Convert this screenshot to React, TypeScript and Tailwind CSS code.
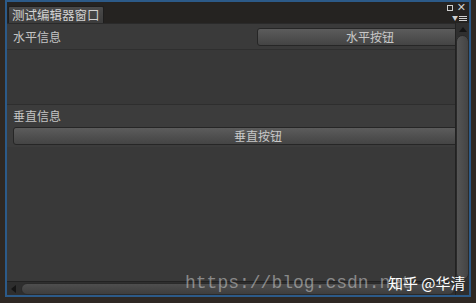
import React from "react";

const cjk = { fontFamily: '"Noto Sans CJK SC", "Liberation Sans", sans-serif' };

export default function App() {
  return (
    <div className="w-[476px] h-[303px] bg-[#2e2823] flex flex-col px-[5px] pb-[6px] relative overflow-hidden" style={cjk}>
      <div className="flex-1 flex flex-col border-2 border-[#2c5a88] bg-[#262626] min-h-0">
        {/* tab bar */}
        <div className="h-[21px] flex items-end pl-[1px] relative shrink-0 bg-[#252321]">
          <div className="h-[17px] w-[96px] bg-gradient-to-b from-[#4a4a4a] to-[#3c3c3c] border border-b-0 border-[#1e1e1e] rounded-t-[2px] flex items-center pl-[3px]">
            <span className="text-[12.5px] leading-none text-[#d2d2d2] whitespace-nowrap">测试编辑器窗口</span>
          </div>
          <div className="absolute right-[16px] top-[3px] w-[6px] h-[6px] border border-[#cfcfcf] bg-[#252321]" />
          <div className="absolute right-[3px] top-[0px] text-[11px] leading-none text-[#cfcfcf]" style={{ fontFamily: '"DejaVu Sans", sans-serif' }}>✕</div>
          <div className="absolute right-[2px] top-[13px] flex items-center gap-[1px]">
            <span className="text-[6px] leading-none text-[#d0d0d0]">▼</span>
            <div className="flex flex-col gap-[1px]">
              <div className="w-[8px] h-[1px] bg-[#d0d0d0]" />
              <div className="w-[8px] h-[1px] bg-[#d0d0d0]" />
              <div className="w-[8px] h-[1px] bg-[#d0d0d0]" />
            </div>
          </div>
        </div>
        {/* body */}
        <div className="flex-1 flex min-h-0">
          <div className="flex-1 flex flex-col bg-[#383838] border-t border-[#2a2a2a] min-w-0">
            <div className="flex-1 flex flex-col overflow-hidden">
              {/* horizontal row */}
              <div className="h-[26px] shrink-0 flex items-center pl-[6px] border-b border-[#2f2f2f] bg-[#3a3a3a]">
                <span className="w-[244px] shrink-0 text-[12px] text-[#c4c4c4] leading-none">水平信息</span>
                <div className="w-[226px] shrink-0 h-[18px] rounded-[3px] border border-[#262626] bg-gradient-to-b from-[#5c5c5c] to-[#444444] flex items-center justify-center">
                  <span className="text-[12px] leading-none text-[#c8c8c8]">水平按钮</span>
                </div>
              </div>
              <div className="h-[55px] shrink-0 bg-[#383838] border-b border-[#2e2e2e]" />
              {/* vertical section */}
              <div className="flex flex-col pl-[6px] bg-[#3c3c3c] pb-[2px] shrink-0">
                <div className="h-[22px] flex items-center">
                  <span className="text-[12px] text-[#c4c4c4] leading-none">垂直信息</span>
                </div>
                <div className="w-[490px] shrink-0 h-[18px] rounded-[3px] border border-[#262626] bg-gradient-to-b from-[#5c5c5c] to-[#444444] flex items-center justify-center">
                  <span className="text-[12px] leading-none text-[#c8c8c8]">垂直按钮</span>
                </div>
              </div>
              <div className="flex-1 bg-[#393939]" />
            </div>
            {/* horizontal scrollbar */}
            <div className="h-[14px] shrink-0 bg-[#2e2e2e] border-t border-[#222] flex items-center">
              <div className="w-[12px] flex items-center justify-center">
                <div className="w-0 h-0 border-y-[4px] border-y-transparent border-r-[5px] border-r-[#151515]" />
              </div>
              <div className="flex-1 h-[12px] rounded-full bg-gradient-to-b from-[#4e4e4e] to-[#3e3e3e] border border-[#2a2a2a] ml-[2px]" />
            </div>
          </div>
          {/* vertical scrollbar */}
          <div className="w-[14px] bg-[#2f2f2f] flex flex-col border-l border-[#222]">
            <div className="h-[12px] flex items-center justify-center">
              <div className="w-0 h-0 border-x-[4px] border-x-transparent border-b-[5px] border-b-[#151515]" />
            </div>
            <div className="flex-1 rounded-full bg-gradient-to-r from-[#555] to-[#444] border border-[#2a2a2a] mb-[2px]" />
            <div className="h-[13px] bg-[#2e2e2e]" />
          </div>
        </div>
      </div>
      {/* watermark */}
      <div className="absolute left-[185px] top-[274px] text-[18px] leading-none text-[#c0c0c0]/60 whitespace-nowrap" style={{ fontFamily: '"Liberation Mono", monospace' }}>https://blog.csdn.net</div>
      <div className="absolute left-[388px] top-[275px] text-[15px] leading-none text-white whitespace-nowrap" style={cjk}>知乎 @华清</div>
    </div>
  );
}
